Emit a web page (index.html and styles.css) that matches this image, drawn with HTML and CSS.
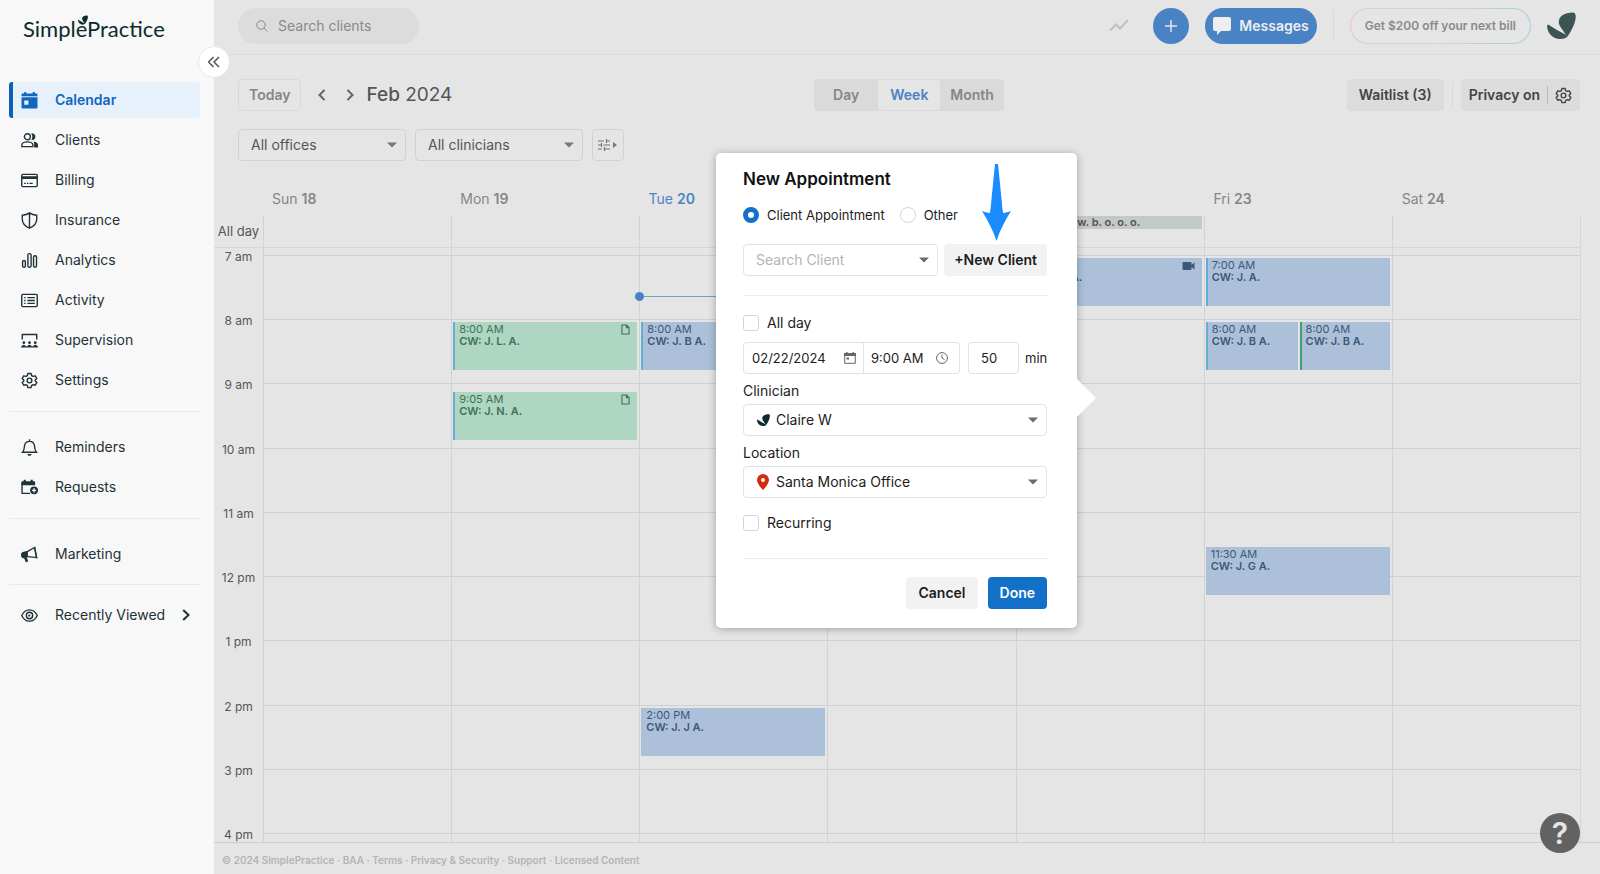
FILE: index.html
```html
<!DOCTYPE html>
<html lang="en">

<head>
    <meta charset="UTF-8">
    <meta name="viewport" content="width=device-width, initial-scale=1.0">
    <title>Calendar | SimplePractice</title>
    <link rel="stylesheet" href="styles.css">
</head>

<body>
    <!-- shared shapes -->
    <svg class="defs" aria-hidden="true">
        <symbol id="leaf" viewBox="0 0 29 27">
            <path d="M25.500.5C18 .5 11.800 4 11.800 10c0 4.500 4.200 7.500 6.700 12.500l2 2C25 18 29 10 28.700 4c-.1-2.500-1.200-3.500-3.200-3.500z"/>
            <path d="M1.200 12.500c-1 0-1.200 1.500-.9 3.500C1.300 22.500 7 27 13 27c4 0 6.500-1 7.500-2.500l-2-2C13 19.500 6 16 1.200 12.500z"/>
        </symbol>
        <symbol id="caret" viewBox="0 0 10 6"><path d="M0 .5h10L5 5.500z"/></symbol>
        <symbol id="gear" viewBox="0 0 24 24">
            <path fill="none" stroke="currentColor" stroke-width="2" stroke-linejoin="round" d="M9.800 2h4.400l.8 3 2.100 1.200 3-.8 2.200 3.800L20.100 11.400v1.300l2.200 2.200-2.200 3.800-3-.9-2.100 1.300-.8 3H9.800L9 19.100l-2.100-1.300-3 .9-2.200-3.800 2.200-2.200v-1.300L1.700 9.200l2.200-3.800 3 .8L9 5z"/>
            <circle cx="12" cy="12" r="3.300" fill="none" stroke="currentColor" stroke-width="2"/>
        </symbol>
        <symbol id="page" viewBox="0 0 10 12"><path fill="none" stroke="currentColor" stroke-width="1.200" stroke-linejoin="round" d="M1 1h5l3 3v7H1zM6 1v3h3"/></symbol>
    </svg>

    <aside class="sidebar">
        <a class="brand" href="#">SimplePractice<svg class="brand-leaf"><use href="#leaf"/></svg></a>
        <button class="collapse" aria-label="Collapse menu">
            <svg width="12" height="12" viewBox="0 0 12 12"><path d="M5.500 1l-5 5 5 5M11 1L6 6l5 5"/></svg>
        </button>

        <nav>
            <a class="item active" href="#">
                <svg viewBox="0 0 16 16"><path class="fill" d="M3 0h2v1.500h6V0h2v1.500h1.500c.6 0 1 .4 1 1V4H.5V2.500c0-.6.400-1 1-1H3zM.5 5h15v9.500c0 .6-.4 1-1 1h-13c-.6 0-1-.4-1-1zM3 8v4h4V8z"/></svg>
                Calendar</a>
            <a class="item" href="#">
                <svg viewBox="0 0 16 16"><circle cx="6" cy="4.500" r="2.800"/><path d="M.8 13.800v-1.500c0-2 3-3 5.200-3s5.200 1 5.200 3v1.500z"/><path class="fill" d="M9.500 1.200c3 0 4 1.400 4 3.200s-1 3.400-4 3.400c1.600-1.800 1.600-4.800 0-6.600zM12 9c2.400.5 4 1.500 4 3.300v2.200h-3.600v-2.200c0-1.300-.1-2.300-.4-3.300z"/></svg>
                Clients</a>
            <a class="item" href="#">
                <svg viewBox="0 0 16 16"><rect x=".7" y="2.200" width="14.600" height="11.600" rx="1"/><path class="fill" d="M1 4h14v2.500H1zM3 10h1.500v1.300H3zM5.500 10H7v1.300H5.500zM8 10h3v1.300H8z"/></svg>
                Billing</a>
            <a class="item" href="#">
                <svg viewBox="0 0 16 16"><path d="M8 .8C6 2.200 3.600 2.800 1.200 3v3.500c0 4 2.800 7 6.800 8.700 4-1.700 6.800-4.700 6.800-8.700V3C12.400 2.800 10 2.200 8 .8zM8 1v14"/></svg>
                Insurance</a>
            <a class="item" href="#">
                <svg viewBox="0 0 16 16"><rect x="1.500" y="8" width="2.600" height="6.300" rx="1.200"/><rect x="6.500" y="1.500" width="3" height="12.800" rx="1.300"/><rect x="11.800" y="3.500" width="2.800" height="10.800" rx="1.300"/></svg>
                Analytics</a>
            <a class="item" href="#">
                <svg viewBox="0 0 16 16"><rect x=".7" y="2.200" width="14.600" height="11.600" rx="1"/><path d="M3 5.300h1.300M3 8h1.300M3 10.700h1.300M6 5.300h7M6 8h7M6 10.700h7"/></svg>
                Activity</a>
            <a class="item" href="#">
                <svg viewBox="0 0 16 16"><path d="M1.200 7V2.300h13.600V7"/><path class="fill" d="M1 14.500C1 12.800 1.300 12 2.500 12S4.500 12.800 4.500 14.500zM6 14.500C6 12.800 6.500 12 8 12s2 .8 2 2.500zM11.500 14.500c0-1.700.5-2.500 2-2.500s2 .8 2 2.500zM0 13.500h16v1H0z"/><circle class="fill" cx="2.700" cy="10" r="1.300"/><circle class="fill" cx="8" cy="10" r="1.300"/><circle class="fill" cx="13.400" cy="10" r="1.300"/></svg>
                Supervision</a>
            <a class="item" href="#"><svg class="solid"><use href="#gear"/></svg>Settings</a>
            <hr>
            <a class="item" href="#">
                <svg viewBox="0 0 16 16"><path d="M1.500 12.500C3 11 3 9.500 3.300 6.500 3.700 3.500 5.500 2.200 8 2.200s4.300 1.300 4.700 4.300c.3 3 .3 4.500 1.800 6zM8 .3v2"/><path class="fill" d="M6 14h4c-.3 1.200-1 1.700-2 1.700S6.300 15.200 6 14z"/></svg>
                Reminders</a>
            <a class="item" href="#">
                <svg viewBox="0 0 16 16"><path d="M1 4v9.500h7.500"/><path class="fill" d="M2.500.8h2V2h4.600V.8h2V2h1.400c.5 0 .8.3.8.8v3H.3v-3c0-.5.300-.8.800-.8h1.400z"/><circle class="fill" cx="12.300" cy="10.700" r="3.700"/><path stroke="#f8f8f8" d="M12.300 8.800v3.800M10.400 10.700h3.800"/></svg>
                Requests</a>
            <hr>
            <a class="item" href="#">
                <svg viewBox="0 0 16 16"><path d="M6 5.200l6.800-3.800 1.800 9.500L6.500 10"/><path class="fill" d="M13.300.5l-1 1.500 2 9.500 1.200.2zM6.500 4.500v6l-1 .4 1.300 3.600-2.300.9L3 11.500c-1.700.2-3-.7-3-2.800S.8 5.800 2.500 5.400z"/></svg>
                Marketing</a>
            <hr class="last">
            <a class="item" href="#">
                <svg viewBox="0 0 16 16"><path d="M.7 8C2.300 4.500 5 2.700 8 2.700S13.700 4.500 15.300 8C13.700 11.500 11 13.300 8 13.300S2.300 11.500.7 8z"/><circle cx="8" cy="8" r="3"/><path d="M8 7v1.200H6.800"/></svg>
                Recently Viewed
                <svg class="more" viewBox="0 0 8 12"><path d="M1.200 1l5.300 5-5.300 5"/></svg></a>
        </nav>
    </aside>

    <main>
        <header class="topbar">
            <label class="search">
                <svg width="12" height="12" viewBox="0 0 12 12"><circle cx="5" cy="5" r="4.200"/><path d="M8 8l3.500 3.500"/></svg>
                <input type="search" aria-label="Search clients" placeholder="Search clients">
            </label>
            <svg class="trend" width="20" height="13" viewBox="0 0 20 13"><path d="M1 11.500l6-6 4 4L19 1"/></svg>
            <button class="add" aria-label="Create"><svg width="12" height="12" viewBox="0 0 12 12"><path d="M6 0v12M0 6h12"/></svg></button>
            <button class="messages"><svg width="18" height="18" viewBox="0 0 18 18"><path d="M2 0h14a2 2 0 0 1 2 2v10a2 2 0 0 1-2 2H8l-4 4v-4H2a2 2 0 0 1-2-2V2a2 2 0 0 1 2-2z"/></svg>Messages</button>
            <span class="sep"></span>
            <button class="promo">Get $200 off your next bill</button>
            <svg class="avatar"><use href="#leaf"/></svg>
        </header>

        <section class="toolbar">
            <div class="left">
                <button class="today">Today</button>
                <button class="arrow" aria-label="Previous week"><svg width="8" height="12" viewBox="0 0 8 12"><path d="M6.500 1L1.500 6l5 5"/></svg></button>
                <button class="arrow" aria-label="Next week"><svg width="8" height="12" viewBox="0 0 8 12"><path d="M1.500 1l5 5-5 5"/></svg></button>
                <h1><b>Feb</b> 2024</h1>
            </div>
            <div class="views">
                <button>Day</button><button class="on">Week</button><button>Month</button>
            </div>
            <div class="right">
                <button class="grey">Waitlist (3)</button>
                <span class="sep"></span>
                <button class="grey privacy">Privacy on<i></i><svg width="17" height="17"><use href="#gear"/></svg></button>
            </div>
        </section>

        <section class="filters">
            <div class="select">
                <select aria-label="Offices"><option>All offices</option></select>
                <svg class="caret"><use href="#caret"/></svg>
            </div>
            <div class="select">
                <select aria-label="Clinicians"><option>All clinicians</option></select>
                <svg class="caret"><use href="#caret"/></svg>
            </div>
            <button class="tune" aria-label="More filters">
                <svg width="20" height="12" viewBox="0 0 20 12"><path d="M0 2h6M8.500 2H12M0 6h3M5.500 6H12M0 10h4M6.500 10H12M8.500 0v4M3.500 4v4M6.500 8v4"/><path class="fill" d="M15 3l4 3-4 3z"/></svg>
            </button>
        </section>

        <section class="calendar">
            <div class="week head">
                <span></span>
                <span>Sun <b>18</b></span>
                <span>Mon <b>19</b></span>
                <span class="current">Tue <b>20</b></span>
                <span>Wed <b>21</b></span>
                <span>Thu <b>22</b></span>
                <span>Fri <b>23</b></span>
                <span>Sat <b>24</b></span>
            </div>
            <div class="week allday">
                <span>All day</span>
                <div></div><div></div><div></div><div></div>
                <div><p class="busy">CW: Claire w. b. o. o. o.</p></div>
                <div></div><div></div>
            </div>
            <div class="week body">
                <div class="hours">
                    <div class="hour"><span>7 am</span></div>
                    <div class="hour"><span>8 am</span></div>
                    <div class="hour"><span>9 am</span></div>
                    <div class="hour"><span>10 am</span></div>
                    <div class="hour"><span>11 am</span></div>
                    <div class="hour"><span>12 pm</span></div>
                    <div class="hour"><span>1 pm</span></div>
                    <div class="hour"><span>2 pm</span></div>
                    <div class="hour"><span>3 pm</span></div>
                    <div class="hour"><span>4 pm</span></div>
                </div>
                <!-- --start is minutes after 7 am -->
                <div class="day"><div class="slots"></div></div>
                <div class="day"><div class="slots">
                    <article class="event green video" style="--start: 60">8:00 AM<b>CW: J. L. A.</b><svg class="note"><use href="#page"/></svg></article>
                    <article class="event green video" style="--start: 125">9:05 AM<b>CW: J. N. A.</b><svg class="note"><use href="#page"/></svg></article>
                </div></div>
                <div class="day"><div class="slots">
                    <div class="now" style="--start: 38"></div>
                    <article class="event video" style="--start: 60">8:00 AM<b>CW: J. B A.</b></article>
                    <article class="event" style="--start: 420">2:00 PM<b>CW: J. J A.</b></article>
                </div></div>
                <div class="day"><div class="slots"></div></div>
                <div class="day"><div class="slots">
                    <article class="event video" style="--start: 0">7:00 AM<b>CW: J. B A.</b>
                        <svg class="cam" viewBox="0 0 12 8"><path d="M0 1a1 1 0 0 1 1-1h7a1 1 0 0 1 1 1v2l3-2.500v7L9 5v2a1 1 0 0 1-1 1H1a1 1 0 0 1-1-1z"/></svg></article>
                </div></div>
                <div class="day"><div class="slots">
                    <article class="event video" style="--start: 0">7:00 AM<b>CW: J. A.</b></article>
                    <article class="event video half" style="--start: 60">8:00 AM<b>CW: J. B A.</b></article>
                    <article class="event office half second" style="--start: 60">8:00 AM<b>CW: J. B A.</b></article>
                    <article class="event" style="--start: 270">11:30 AM<b>CW: J. G A.</b></article>
                </div></div>
                <div class="day"><div class="slots"></div></div>
            </div>
        </section>

        <footer>© 2024 SimplePractice · <a href="#">BAA</a> · <a href="#">Terms</a> · <a href="#">Privacy &amp; Security</a> · <a href="#">Support</a> · <a href="#">Licensed Content</a></footer>
    </main>

    <form class="popup">
        <h2>New Appointment</h2>
        <div class="types">
            <label><input type="radio" name="type" checked>Client Appointment</label>
            <label><input type="radio" name="type">Other</label>
        </div>
        <div class="client">
            <div class="select">
                <select class="empty" aria-label="Client"><option>Search Client</option></select>
                <svg class="caret"><use href="#caret"/></svg>
            </div>
            <button type="button" class="btn">+New Client</button>
        </div>
        <hr>
        <label class="check"><input type="checkbox">All day</label>
        <div class="when">
            <div class="field date">
                <input type="text" aria-label="Date" value="02/22/2024">
                <svg width="12" height="12" viewBox="0 0 12 12"><path d="M.7 1.500h10.600v9.800H.7z"/><path class="fill" d="M0 1h12v3H0zM2.500 5.500H5v2H2.500zM2 0h1.500v2H2zM8.500 0H10v2H8.500z"/></svg>
            </div>
            <div class="field time">
                <input type="text" aria-label="Start time" value="9:00 AM">
                <svg width="12" height="12" viewBox="0 0 12 12"><circle cx="6" cy="6" r="5.400"/><path d="M6 2.500V6l2.500 1.500"/></svg>
            </div>
            <input class="mins" type="text" id="mins" value="50">
            <label for="mins">min</label>
        </div>
        <label class="name" for="clinician">Clinician</label>
        <div class="select icon">
            <svg class="lead leaf"><use href="#leaf"/></svg>
            <select id="clinician"><option>Claire W</option></select>
            <svg class="caret"><use href="#caret"/></svg>
        </div>
        <label class="name" for="location">Location</label>
        <div class="select icon">
            <svg class="lead pin" viewBox="0 0 12 16"><path d="M6 0a6 6 0 0 0-6 6c0 4 6 10 6 10s6-6 6-10a6 6 0 0 0-6-6zm0 4a2 2 0 1 1 0 4 2 2 0 0 1 0-4z"/></svg>
            <select id="location"><option>Santa Monica Office</option></select>
            <svg class="caret"><use href="#caret"/></svg>
        </div>
        <label class="check recurring"><input type="checkbox">Recurring</label>
        <hr class="end">
        <div class="actions">
            <button type="button" class="btn">Cancel</button>
            <button type="button" class="btn done">Done</button>
        </div>
        <svg class="pointer" viewBox="0 0 29 77"><path d="M13 0h3l3.800 38c.3 4 .7 8 1.400 11 2.600-.2 5-.9 7.800-2C23 57 18 66 14.500 77 11 66 6 57 0 47c2.800 1.100 5.200 1.800 7.800 2 .7-3 1.100-7 1.400-11z"/></svg>
    </form>

    <button class="help" aria-label="Help">?</button>
</body>

</html>
```
FILE: styles.css
```css
*{
    box-sizing: border-box;
}
body{
    margin: 0;
    display: flex;
    height: 100vh;
    min-height: 700px;
    position: relative;
    overflow: hidden;
    background: #e5e5e5;
    color: #555;
    font: 14px/20px Inter, "Liberation Sans", sans-serif;
}
button, input, select{
    font: inherit;
    color: inherit;
    margin: 0;
    padding: 0;
    border: 0;
    background: none;
}
button{
    font-weight: 600;
    white-space: nowrap;
}
b{
    font-weight: 600;
}
a{
    color: inherit;
    text-decoration: none;
}
.defs{
    position: absolute;
    width: 0;
    height: 0;
}

/* sidebar */
.sidebar{
    position: relative;
    flex: none;
    width: 214px;
    padding: 13px 14px 0 9px;
    background: #f8f8f8;
    color: #1f3238;
}
.brand{
    position: relative;
    display: block;
    height: 32px;
    margin-left: 14px;
    font: 22px/32px Lato, sans-serif;
    color: #0b2b2e;
}
.brand-leaf{
    position: absolute;
    left: 55px;
    top: 2px;
    width: 10px;
    height: 10px;
    fill: #0b2b2e;
}
.collapse{
    position: absolute;
    z-index: 2;
    right: -16px;
    top: 46px;
    width: 32px;
    height: 32px;
    display: grid;
    place-items: center;
    border: 1px solid #e9e9e9;
    border-radius: 50%;
    background: #fff;
}
.collapse svg{
    fill: none;
    stroke: #555;
    stroke-width: 1.5;
}
nav{
    display: flex;
    flex-direction: column;
    gap: 4px;
    margin-top: 37px;
}
.item{
    display: flex;
    align-items: center;
    height: 36px;
    padding-left: 12px;
    border-radius: 3px;
}
.item svg{
    width: 17px;
    height: 17px;
    margin-right: 17px;
    fill: none;
    stroke: currentColor;
    stroke-width: 1.3;
}
.item svg .fill{
    fill: currentColor;
    stroke: none;
}
.item svg.solid{
    stroke: none;
}
.item .more{
    width: 8px;
    height: 12px;
    margin: 0 10px 0 auto;
    stroke-width: 2;
}
.item.active{
    padding-left: 8px;
    border-left: 4px solid #0d5fb8;
    background: #e6f1fb;
    color: #1066c0;
    font-weight: 600;
}
nav hr{
    width: 100%;
    margin: 9px 0 13px;
    border: 0;
    border-top: 1px solid #e9e9e9;
}
nav hr.last{
    margin: 8px 0;
}

/* top bar */
main{
    flex: 1;
    min-width: 0;
    display: flex;
    flex-direction: column;
}
.topbar{
    display: flex;
    align-items: center;
    height: 55px;
    padding: 0 24px 3px;
    border-bottom: 1px solid #dcdcdc;
}
.search{
    display: flex;
    align-items: center;
    gap: 10px;
    width: 181px;
    height: 36px;
    margin-right: auto;
    padding: 0 18px;
    border-radius: 18px;
    background: #dcdcdc;
}
.search svg{
    flex: none;
    fill: none;
    stroke: #8a8a8a;
}
.search input{
    width: 100%;
    outline: 0;
}
.search input::placeholder{
    color: #8a8a8a;
    opacity: 1;
}
.trend{
    margin-right: 24px;
    fill: none;
    stroke: #c0c0c0;
    stroke-width: 2;
}
.add, .messages{
    height: 36px;
    border-radius: 18px;
    background: #4a83c4;
    color: #eee;
}
.add{
    width: 36px;
    margin-right: 16px;
    display: grid;
    place-items: center;
}
.add svg{
    stroke: #e5e5e5;
    stroke-width: 1.5;
}
.messages{
    display: flex;
    align-items: center;
    gap: 8px;
    padding: 0 8px;
}
.messages svg{
    fill: #eee;
}
.sep{
    width: 1px;
    height: 32px;
    background: #dadada;
}
.topbar .sep{
    margin: 0 16px;
}
.promo{
    height: 36px;
    padding: 0 14px;
    border: 1px solid transparent;
    border-radius: 18px;
    background: linear-gradient(#e5e5e5, #e5e5e5) padding-box, linear-gradient(90deg, #e8c8c8, #d0d3d8 50%, #a3d0e0) border-box;
    color: #8a8a8a;
    font-size: 12px;
}
.avatar{
    width: 29px;
    height: 27px;
    margin-left: 16px;
    fill: #3c5452;
}

/* calendar toolbar */
.toolbar{
    display: grid;
    grid-template-columns: 1fr auto 1fr;
    height: 32px;
    margin: 24px 20px 18px 24px;
}
.left, .right, .views{
    display: flex;
    align-items: center;
}
.today{
    height: 32px;
    padding: 0 10px;
    border: 1px solid #d8d8d8;
    border-radius: 4px;
    color: #868686;
}
.arrow{
    width: 8px;
    height: 12px;
    margin-left: 17px;
    line-height: 0;
}
.arrow + .arrow{
    margin-left: 20px;
}
.arrow svg{
    fill: none;
    stroke: #666;
    stroke-width: 2;
}
h1{
    margin: 0 0 0 12px;
    font-size: 19px;
    font-weight: 400;
}
h1 b{
    font-weight: 500;
}
.views{
    border-radius: 4px;
    background: #dadada;
    color: #868686;
}
.views button{
    height: 32px;
    padding: 0 10px;
}
.views button:first-child{
    padding: 0 19px;
}
.views .on{
    height: 30px;
    padding: 0 12px;
    border-radius: 3px;
    background: #e5e5e5;
    color: #4a83c4;
}
.right{
    justify-content: flex-end;
    gap: 8px;
}
.grey{
    height: 32px;
    padding: 0 12px;
    border-radius: 4px;
    background: #dcdcdc;
    color: #444;
}
.right .sep{
    height: 28px;
}
.privacy{
    display: flex;
    align-items: center;
    gap: 7px;
    padding: 0 8px;
}
.privacy i{
    width: 1px;
    height: 18px;
    background: #b8b8b8;
}
.filters{
    display: flex;
    gap: 9px;
    margin: 0 24px 22px;
}
.select{
    position: relative;
}
.select select{
    appearance: none;
    display: block;
    width: 100%;
    height: 32px;
    padding: 0 30px 0 12px;
    border: 1px solid #d2d2d2;
    border-radius: 4px;
}
.filters .select{
    width: 168px;
}
.caret{
    position: absolute;
    right: 9px;
    top: 13px;
    width: 10px;
    height: 6px;
    fill: #777;
}
.tune{
    width: 32px;
    height: 32px;
    display: grid;
    place-items: center;
    border: 1px solid #d2d2d2;
    border-radius: 4px;
}
.tune path{
    stroke: #777;
    stroke-width: 1.2;
}
.tune .fill{
    fill: #777;
    stroke: none;
}

/* week grid */
.calendar{
    flex: 1;
    min-height: 0;
    display: flex;
    flex-direction: column;
    border-bottom: 1px solid #cfcfcf;
}
.week{
    display: grid;
    grid-template-columns: 49px repeat(7, 1fr);
    margin-right: 19px;
}
.head{
    height: 32px;
    align-items: center;
    color: #868686;
}
.head span{
    padding-left: 9px;
}
.head .current{
    color: #4a83c4;
}
.allday{
    height: 33px;
    position: relative;
    border-right: 1px solid #d6d6d6;
}
.allday::after{
    content: "";
    position: absolute;
    left: 0;
    right: -1px;
    bottom: 0;
    border-bottom: 1px solid #d6d6d6;
}
.allday span{
    font-size: 13px;
    line-height: 32px;
    text-align: center;
}
.allday div{
    border-left: 1px solid #d2d2d2;
}
.busy{
    height: 13px;
    margin: 1px 2px;
    background: #c3c8c9;
    font-size: 11px;
    line-height: 13px;
    font-weight: 600;
}
.body{
    position: relative;
    flex: 1;
    border-right: 1px solid #d6d6d6;
}
/* hour lines run under the day columns */
.hours{
    position: absolute;
    inset: 0;
    display: grid;
    grid-template-rows: repeat(9, 1fr) 9px;
    padding-top: 7px;
}
.hour{
    margin-left: 49px;
    border-top: 1px solid #d0d0d0;
}
.hour span{
    display: block;
    width: 49px;
    margin: -7px 0 0 -49px;
    font-size: 12px;
    line-height: 16px;
    text-align: center;
}
.day{
    position: relative;
    padding: 7px 2px 9px 1px;
    border-left: 1px solid #d2d2d2;
}
.day:nth-child(2){
    grid-column: 2;
}
.slots{
    position: relative;
    height: 100%;
}
.event{
    position: absolute;
    left: 0;
    right: 0;
    top: calc(var(--start) / 540 * 100% + 3px);
    height: 48px;
    padding: 1px 4px 0;
    border: 1px solid #a5c0dd;
    border-width: 0 1px;
    background: #acc1d9;
    color: #3c5878;
    font-size: 11px;
    line-height: 12px;
}
.event b{
    display: block;
}
.event.video{
    border-left: 2px solid #62aed6;
}
.event.office{
    border-left: 2px solid #3f9c6c;
}
.event.green{
    background: #aed6c2;
    border-right-color: #b4dac8;
    color: #3b7358;
}
.half{
    right: 50%;
}
.second{
    left: 51%;
    right: 0;
}
.note{
    position: absolute;
    right: 6px;
    top: 2px;
    width: 9px;
    height: 11px;
}
.cam{
    position: absolute;
    right: 6px;
    top: 4px;
    width: 13px;
    height: 8px;
    fill: #3c5878;
}
.now{
    position: absolute;
    left: -1px;
    right: -2px;
    top: calc(var(--start) / 540 * 100%);
    border-top: 1px solid #6f9fd4;
}
.now::before{
    content: "";
    position: absolute;
    left: -5px;
    top: -5px;
    width: 9px;
    height: 9px;
    border-radius: 50%;
    background: #4a83c4;
}
footer{
    height: 31px;
    padding: 0 8px;
    font-size: 10px;
    line-height: 34px;
    font-weight: 600;
    color: #b4b4b4;
}

/* new appointment */
.popup{
    position: absolute;
    z-index: 3;
    left: 716px;
    top: 153px;
    width: 361px;
    padding: 16px 30px 19px 27px;
    border-radius: 5px;
    background: #fff;
    box-shadow: 0 1px 8px rgba(0, 0, 0, .3);
    color: #1c1c1c;
}
.popup::after{
    content: "";
    position: absolute;
    right: -19px;
    top: 226px;
    width: 19px;
    height: 38px;
    background: #fff;
    clip-path: polygon(0 0, 100% 50%, 0 100%);
}
h2{
    margin: 0 0 16px;
    font-size: 17px;
    line-height: 20px;
    font-weight: 600;
    color: #111;
}
.types{
    display: flex;
    gap: 15px;
    margin-bottom: 19px;
    font-size: 13px;
}
.types label, .check{
    display: flex;
    align-items: center;
    gap: 8px;
}
.popup [type=radio], .popup [type=checkbox]{
    appearance: none;
    width: 16px;
    height: 16px;
    border: 1px solid #d5d5d5;
    border-radius: 3px;
    background: #fff;
}
.popup [type=radio]{
    border-radius: 50%;
}
.popup [type=radio]:checked{
    border: 5px solid #1270c9;
}
.client{
    display: flex;
    gap: 6px;
}
.client .select{
    flex: 1;
}
.popup select, .field, .mins{
    border: 1px solid #e2e2e2;
}
.popup select.empty{
    color: #b5b5b5;
}
.popup .caret{
    fill: #6a6a6a;
}
.btn{
    height: 32px;
    padding: 0 12px;
    border-radius: 4px;
    background: #f2f2f2;
}
.client .btn{
    padding: 0 10px;
}
.popup hr{
    margin: 19px 0 17px;
    border: 0;
    border-top: 1px solid #ececec;
}
.when{
    display: flex;
    align-items: center;
    margin: 9px 0 7px;
    font-size: 13px;
}
.field{
    display: flex;
    align-items: center;
    height: 32px;
    padding: 0 7px 0 8px;
}
.field input{
    flex: 1;
    min-width: 0;
}
.field svg{
    flex: none;
    fill: none;
    stroke: #666;
}
.field .fill{
    fill: #666;
    stroke: none;
}
.date{
    width: 121px;
    border-radius: 4px 0 0 4px;
}
.time{
    width: 97px;
    margin-left: -1px;
    padding: 0 11px 0 7px;
    border-radius: 0 4px 4px 0;
}
.mins{
    width: 51px;
    height: 32px;
    margin: 0 6px 0 8px;
    padding-left: 12px;
    border-radius: 4px;
}
.name{
    display: block;
    margin-bottom: 3px;
}
.icon{
    margin-bottom: 7px;
}
.icon select{
    padding-left: 32px;
}
.lead{
    position: absolute;
    left: 14px;
    top: 8px;
    width: 12px;
    height: 16px;
}
.leaf{
    width: 13px;
    fill: #0b2b2e;
}
.pin{
    fill: #d42b0f;
}
.recurring{
    margin-top: 15px;
}
.popup hr.end{
    margin: 25px 0 18px;
}
.actions{
    display: flex;
    justify-content: flex-end;
    gap: 10px;
}
.done{
    background: #1270c9;
    color: #fff;
}
.pointer{
    position: absolute;
    left: 266px;
    top: 11px;
    width: 29px;
    height: 77px;
    fill: #1a8cff;
}
.help{
    position: absolute;
    z-index: 2;
    right: 20px;
    bottom: 21px;
    width: 40px;
    height: 40px;
    border-radius: 50%;
    background: #626262;
    color: #e5e5e5;
    font-size: 30px;
    line-height: 40px;
}
```
